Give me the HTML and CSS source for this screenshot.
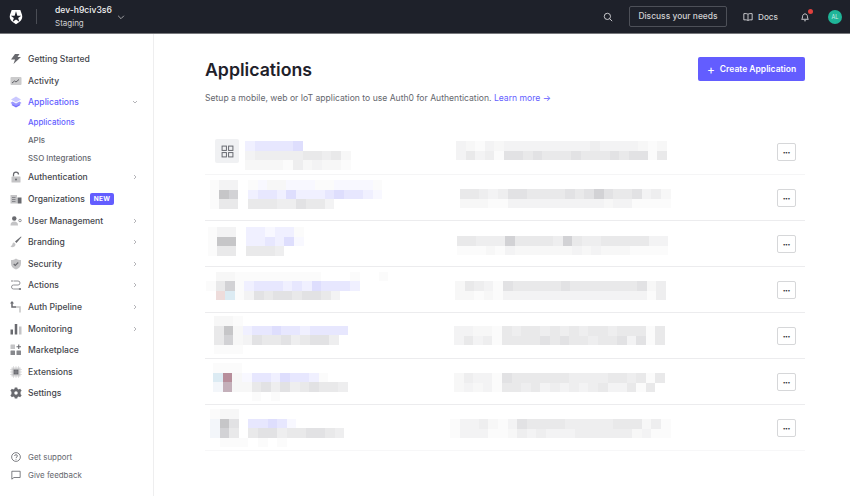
FILE: index.html
```html
<!DOCTYPE html>
<html lang="en">

<head>
    <meta charset="UTF-8">
    <title>Applications</title>
    <link rel="stylesheet" href="styles.css">
</head>

<body>
    <header class="topbar">
        <svg class="logo" viewBox="0 0 24 24"><path fill="#fff" fill-rule="evenodd" d="M18.500 1.500h-13L3 8.500C1.800 12.300 3.200 16.500 6.500 19L12 23l5.500-4c3.300-2.500 4.700-6.700 3.500-10.500zM17 19l-5-3.400L7 19l1.800-5.400L4.200 10H10l2-6.500 2 6.500h5.800l-4.600 3.600z"/></svg>
        <span class="topbar-divider"></span>
        <div class="tenant">
            <div class="tenant-name">dev-h9civ3s6</div>
            <div class="tenant-env">Staging</div>
        </div>
        <svg class="tenant-chevron" viewBox="0 0 12 12"><path d="M2.500 4.500 6 8l3.500-3.500"/></svg>

        <div class="topbar-right">
            <svg class="top-icon search" viewBox="0 0 24 24"><circle cx="10.500" cy="10.500" r="7.500"/><path d="m16 16 6 6"/></svg>
            <a class="discuss">Discuss your needs</a>
            <a class="docs">
                <svg class="top-icon" viewBox="0 0 24 24"><path d="M12 5.500C10 3.800 6 3.500 2 4v15c4-.5 8-.2 10 1.500 2-1.700 6-2 10-1.500V4c-4-.5-8-.2-10 1.500zM12 5.500v15"/></svg>
                Docs
            </a>
            <span class="bell">
                <svg class="top-icon" viewBox="0 0 24 24"><path d="M4 17.500c1.500-1.500 2-3 2-6 0-4 2.500-7 6-7s6 3 6 7c0 3 .5 4.500 2 6zM10 21h4"/></svg>
                <i class="bell-dot"></i>
            </span>
            <span class="avatar">AL</span>
        </div>
    </header>

    <div class="layout">
        <aside class="sidebar">
            <nav>
                <a class="nav-item">
                    <svg class="nav-icon" viewBox="0 0 24 24"><path fill="#55565c" d="M10 2h9l-4 6h7L7 22l3-9H2z"/></svg>
                    Getting Started
                </a>
                <a class="nav-item">
                    <svg class="nav-icon" viewBox="0 0 24 24"><rect x="1" y="4" width="22" height="16" rx="2" fill="#c4c4c6"/><path fill="none" stroke="#4d4e54" stroke-width="2" d="m4 16 5-4 3 2 6-5"/></svg>
                    Activity
                </a>
                <a class="nav-item active">
                    <svg class="nav-icon" viewBox="0 0 24 24"><path fill="#c3c1ff" d="m12 1 10 6-10 6L2 7z"/><path fill="#8f8bff" d="m5 11 7 4 7-4 4 3-11 7-11-7z"/><path fill="#635dff" d="m5 16 7 4 7-4 2 2-9 5-9-5z"/></svg>
                    Applications
                    <svg class="nav-chevron" viewBox="0 0 12 12"><path d="M3 4.500 6 7.500l3-3"/></svg>
                </a>
                <div class="sub-nav">
                    <a class="sub-item active">Applications</a>
                    <a class="sub-item">APIs</a>
                    <a class="sub-item">SSO Integrations</a>
                </div>
                <a class="nav-item">
                    <svg class="nav-icon" viewBox="0 0 24 24"><path fill="none" stroke="#55565c" stroke-width="2.500" d="M7 11V7a5 5 0 0 1 10 0"/><rect x="3" y="11" width="18" height="12" rx="1" fill="#bdbdbf"/><circle cx="12" cy="17" r="2" fill="#55565c"/></svg>
                    Authentication
                    <svg class="nav-chevron" viewBox="0 0 12 12"><path d="M4.500 3 7.500 6l-3 3"/></svg>
                </a>
                <a class="nav-item">
                    <svg class="nav-icon" viewBox="0 0 24 24"><rect x="1" y="4" width="13" height="17" fill="#bdbdbf"/><rect x="15" y="9" width="8" height="12" fill="#55565c"/><path stroke="#77787e" stroke-width="2" d="M4 9h7M4 13h7M4 17h7"/></svg>
                    Organizations
                    <span class="badge">NEW</span>
                </a>
                <a class="nav-item">
                    <svg class="nav-icon" viewBox="0 0 24 24"><circle cx="8.500" cy="7" r="4.500" fill="#55565c"/><path fill="#bdbdbf" d="M1 21c0-6 3-8 7.500-8s7.500 2 7.500 8z"/><circle cx="20" cy="11" r="2.500" fill="none" stroke="#77787e" stroke-width="1.800"/></svg>
                    User Management
                    <svg class="nav-chevron" viewBox="0 0 12 12"><path d="M4.500 3 7.500 6l-3 3"/></svg>
                </a>
                <a class="nav-item">
                    <svg class="nav-icon" viewBox="0 0 24 24"><path fill="#55565c" d="m22 1 1 1-10 12-3-3z"/><path fill="#bdbdbf" d="M8 13c-3 0-3 4-4 5l-3 4c5 1 10 0 10-6z"/></svg>
                    Branding
                    <svg class="nav-chevron" viewBox="0 0 12 12"><path d="M4.500 3 7.500 6l-3 3"/></svg>
                </a>
                <a class="nav-item">
                    <svg class="nav-icon" viewBox="0 0 24 24"><path fill="#bdbdbf" d="M12 1c3 2 6 3 10 3v7c0 6-4 10-10 12C6 21 2 17 2 11V4c4 0 7-1 10-3z"/><path fill="none" stroke="#55565c" stroke-width="2.200" d="m7.500 12 3 3 6-6"/></svg>
                    Security
                    <svg class="nav-chevron" viewBox="0 0 12 12"><path d="M4.500 3 7.500 6l-3 3"/></svg>
                </a>
                <a class="nav-item">
                    <svg class="nav-icon" viewBox="0 0 24 24"><rect x="2" y="2" width="5" height="4" fill="#bdbdbf"/><rect x="17" y="18" width="5" height="4" fill="#77787e"/><path fill="none" stroke="#77787e" stroke-width="1.800" d="M8 4h8a3.500 3.500 0 0 1 0 8H7a4 4 0 0 0 0 8h9"/></svg>
                    Actions
                    <svg class="nav-chevron" viewBox="0 0 12 12"><path d="M4.500 3 7.500 6l-3 3"/></svg>
                </a>
                <a class="nav-item">
                    <svg class="nav-icon" viewBox="0 0 24 24"><path fill="none" stroke="#55565c" stroke-width="3" d="M4 3v9h8"/><path fill="none" stroke="#bdbdbf" stroke-width="3" d="M12 12h8v11"/><path fill="#55565c" d="M0 5l4-5 4 5z"/></svg>
                    Auth Pipeline
                    <svg class="nav-chevron" viewBox="0 0 12 12"><path d="M4.500 3 7.500 6l-3 3"/></svg>
                </a>
                <a class="nav-item">
                    <svg class="nav-icon" viewBox="0 0 24 24"><rect x="1" y="13" width="5" height="10" fill="#55565c"/><rect x="9.500" y="2" width="5" height="21" fill="#55565c"/><rect x="18" y="7" width="5" height="16" fill="#bdbdbf"/></svg>
                    Monitoring
                    <svg class="nav-chevron" viewBox="0 0 12 12"><path d="M4.500 3 7.500 6l-3 3"/></svg>
                </a>
                <a class="nav-item">
                    <svg class="nav-icon" viewBox="0 0 24 24"><rect x="1" y="1" width="9" height="9" rx="1" fill="#bdbdbf"/><rect x="1" y="13" width="9" height="9" rx="1" fill="#77787e"/><rect x="13" y="13" width="9" height="9" rx="1" fill="#77787e"/><path stroke="#55565c" stroke-width="2.200" d="M17.500 1v9M13 5.500h9"/></svg>
                    Marketplace
                </a>
                <a class="nav-item">
                    <svg class="nav-icon" viewBox="0 0 24 24"><rect x="3" y="3" width="18" height="18" fill="#d4d4d6"/><rect x="7" y="7" width="10" height="10" fill="#55565c"/><path stroke="#a8a8ac" stroke-width="1.500" d="M7 0v24M12 0v24M17 0v24M0 7h24M0 12h24M0 17h24" opacity=".45"/></svg>
                    Extensions
                </a>
                <a class="nav-item">
                    <svg class="nav-icon" viewBox="0 0 24 24"><path fill="#55565c" fill-rule="evenodd" d="M9.500 1h5l.7 3.200 2.200 1 2.900-1.700 3 3.800-2.200 2.300v4.800l2.200 2.300-3 3.800-2.900-1.700-2.200 1-.7 3.200h-5l-.7-3.200-2.200-1-2.900 1.700-3-3.800 2.200-2.300V9.600L.7 7.300l3-3.800 2.900 1.700 2.200-1zM12 8.500a3.500 3.500 0 1 0 0 7 3.500 3.500 0 0 0 0-7z"/></svg>
                    Settings
                </a>
            </nav>
            <div class="sidebar-foot">
                <a class="foot-item">
                    <svg class="foot-icon" viewBox="0 0 24 24"><circle cx="12" cy="12" r="10.500"/><path d="M8.500 9.500C8.500 7.500 10 6.500 12 6.500s3.500 1.200 3.500 3c0 2.500-3.500 2.500-3.500 5M12 16.500v2"/></svg>
                    Get support
                </a>
                <a class="foot-item">
                    <svg class="foot-icon" viewBox="0 0 24 24"><path d="M2 3h20v15H7l-5 4z"/></svg>
                    Give feedback
                </a>
            </div>
        </aside>

        <main class="content">
            <div class="page-head">
                <h1>Applications</h1>
                <a class="create-btn"><span class="plus">+</span>Create Application</a>
            </div>
            <p class="page-desc">Setup a mobile, web or IoT application to use Auth0 for Authentication. <a>Learn more →</a></p>
            <div class="app-list" id="apps"></div>
        </main>
    </div>

    <script src="app.js"></script>
</body>

</html>
```

FILE: styles.css
```css
* {
    box-sizing: border-box;
}

html,
body {
    height: 100%;
}

body {
    margin: 0;
    overflow: hidden;
    background-color: #fff;
    color: #1e212a;
    font-family: Inter, "Liberation Sans", sans-serif;
}

a {
    text-decoration: none;
}

.topbar {
    display: flex;
    align-items: center;
    height: 34px;
    padding-left: 8px;
    background-color: #1e212a;
    border-bottom: 1px solid #77787c;
}

.logo {
    width: 16px;
    height: 16px;
}

.topbar-divider {
    width: 1px;
    height: 15px;
    margin: 0 18px 0 12px;
    background-color: #4a4d55;
}

.tenant-name {
    color: #f1f1f2;
    font-size: 8.600px;
    font-weight: 500;
    line-height: 12px;
}

.tenant-env {
    margin-top: 1px;
    color: #cfd0d2;
    font-size: 8px;
    line-height: 12px;
}

.tenant-chevron {
    width: 10px;
    height: 10px;
    margin-left: 4px;
    fill: none;
    stroke: #b9babd;
}

.topbar-right {
    display: flex;
    align-items: center;
    margin-left: auto;
    padding-right: 8px;
}

.top-icon {
    width: 10px;
    height: 10px;
    fill: none;
    stroke: #e6e6e8;
    stroke-width: 2;
}

.search {
    width: 10px;
    height: 10px;
    margin-right: 16px;
}

.discuss {
    display: block;
    width: 98px;
    height: 21px;
    border: 1px solid #4d5058;
    border-radius: 2px;
    color: #d0d0d2;
    font-size: 8.450px;
    font-weight: 500;
    line-height: 19px;
    text-align: center;
}

.docs {
    display: flex;
    align-items: center;
    gap: 5px;
    margin-left: 16px;
    color: #d0d0d2;
    font-size: 8.200px;
    font-weight: 500;
}

.bell {
    position: relative;
    display: flex;
    margin-left: 22px;
}

.bell-dot {
    position: absolute;
    top: -3px;
    right: -3px;
    width: 5px;
    height: 5px;
    border-radius: 50%;
    background-color: #e0413e;
}

.avatar {
    width: 14px;
    height: 14px;
    margin-left: 18px;
    border-radius: 50%;
    background-color: #1fb598;
    color: #cdeee6;
    font-size: 5.500px;
    line-height: 14px;
    text-align: center;
}

.layout {
    display: flex;
    height: 462px;
}

.sidebar {
    display: flex;
    flex-direction: column;
    flex: none;
    width: 154px;
    padding: 14.200px 0 12px 10px;
    border-right: 1px solid #eeeeef;
}

.nav-item {
    display: flex;
    align-items: center;
    height: 21.600px;
    color: #45464c;
    font-size: 8.550px;
    font-weight: 500;
}

.nav-item.active {
    color: #635dff;
}

.nav-icon {
    flex: none;
    width: 12px;
    height: 12px;
    margin-right: 6px;
    opacity: .88;
}

.nav-chevron {
    width: 8px;
    height: 8px;
    margin-left: auto;
    margin-right: 14px;
    fill: none;
    stroke: #8f9095;
}

.sub-nav {
    height: 53.600px;
}

.sub-item {
    display: block;
    height: 18px;
    padding-left: 18px;
    color: #65676e;
    font-size: 7.900px;
    font-weight: 500;
    line-height: 18px;
}

.sub-item.active {
    color: #635dff;
}

.badge {
    margin-left: 5px;
    padding: 0 4px;
    border-radius: 2px;
    background-color: #635dff;
    color: #fff;
    font-size: 6.500px;
    font-weight: 700;
    line-height: 12px;
    letter-spacing: .3px;
}

.sidebar-foot {
    margin-top: auto;
}

.foot-item {
    display: flex;
    align-items: center;
    gap: 7px;
    height: 18px;
    padding-left: 1px;
    color: #65676e;
    font-size: 7.900px;
}

.foot-icon {
    width: 10px;
    height: 10px;
    fill: none;
    stroke: #55565c;
    stroke-width: 1.800;
}

.content {
    flex: 1;
    padding: 23px 45px 0 51px;
}

.page-head {
    display: flex;
    align-items: center;
    justify-content: space-between;
    height: 24px;
}

h1 {
    margin: 0;
    font-size: 17.700px;
    font-weight: 600;
}

.create-btn {
    display: flex;
    align-items: center;
    justify-content: center;
    width: 107px;
    height: 24px;
    border-radius: 2px;
    background-color: #635dff;
    color: #fff;
    font-size: 8.500px;
    font-weight: 600;
}

.plus {
    margin-right: 5px;
    font-size: 12px;
    font-weight: 400;
}

.page-desc {
    margin: 10px 0 0;
    color: #65676e;
    font-size: 8.600px;
    line-height: 14px;
}

.page-desc a {
    color: #635dff;
}

.app-list {
    margin-top: 24px;
}

.app-row {
    display: grid;
    grid-template-columns: 245px 1fr auto;
    height: 46px;
    border-bottom: 1px solid #ececee;
}

.app-row:first-child {
    border-bottom-color: #f5f5f6;
}

.app-row:last-child {
    border-bottom-color: #f7f7f8;
}

.app-name {
    display: flex;
    align-items: flex-start;
}

.tile {
    display: flex;
    align-items: center;
    justify-content: center;
    flex: none;
    width: 24px;
    height: 24px;
    margin: -2px 6px 0 10px;
    border-radius: 2px;
    background-color: #f0f1f3;
}

.tile svg {
    width: 13px;
    height: 13px;
    fill: none;
    stroke: #65676e;
    stroke-width: 1.800;
}

.blur-line {
    display: flex;
    height: 9.600px;
}

.blur-line i {
    flex: none;
    width: 9.600px;
}

.more-btn {
    align-self: center;
    width: 19px;
    height: 18px;
    margin-right: 9px;
    padding: 0;
    border: 1px solid #d6d7d9;
    border-radius: 2px;
    background-color: #fff;
    color: #2a2c33;
    font-family: inherit;
    font-size: 5px;
    font-weight: 700;
    line-height: 10px;
}

/* pixelated cell shades */
.a { background-color: #fbfbfb; }
.b { background-color: #f7f7f7; }
.c { background-color: #f3f3f4; }
.d { background-color: #eeeeef; }
.e { background-color: #e9e9ea; }
.f { background-color: #e2e2e4; }
.g { background-color: #d2d2d5; }
.h { background-color: #c6c6c8; }
.p { background-color: #f8f8ff; }
.q { background-color: #f0f0ff; }
.r { background-color: #e7e7fe; }
.s { background-color: #dedefd; }
.t { background-color: #dcebf3; }
.u { background-color: #eedcdb; }
.v { background-color: #b78e9b; }
.w { background-color: #c4b0ba; }
.x { background-color: #f3f6fa; }
```

FILE: app.js
```js
// list rows are blurred in the design, each line is a string of shade classes
var apps = [
    {
        tile: true, nameX: 0, nameY: 12, urlX: 6, urlY: 12,
        name: ['qrrrrs', 'cdddddeedeb', 'bbbbadbcbba'],
        url: ['cbacbcccccccccdccccbab', 'cecdaffefeeefeeefeffae']
    },
    {
        nameX: 4.7, nameY: 5, urlX: 0, urlY: 14,
        name: ['acc.apbbpppaappppa', 'ahg.qrrqsqqqrsrrqp', 'aee.eeeddfeec'],
        url: ['.eedcdffeeeefefgfeefcdb', '.bbbaaccccccccccbccaaaa']
    },
    {
        nameX: 2.7, nameY: 6, urlX: 7, urlY: 15,
        name: ['acc.qqpqqa', 'ahh.qqrqsp', 'aee.eeed'],
        url: ['eedddgeeeedgeddeeeeecc', 'aaabacbbbbbbcbcbbbaaaa']
    },
    {
        nameX: 1, nameY: 4.7, urlX: 5, urlY: 14,
        name: ['.bbaaaaaaaaa...a..a', 'aegaqrrrqrqsrrrq', '.utacfeffeffec'],
        url: ['bedcafeeeeefeeeeeeefbd', 'bbabacccccccccccccccad']
    },
    {
        nameX: 9, nameY: 3, urlX: 4, urlY: 13,
        name: ['bba', 'ehbqrrsrrqrrrr', 'egbcfeefdeffd', 'aaa'],
        url: ['ccbbaedeedededeedeeeae', 'cecdaeeeefefeedeefcfae']
    },
    {
        nameX: 8.3, nameY: 4, urlX: 4, urlY: 14,
        name: ['aaa', 'tvbprrqsrrqa', 'xwbbefdfdefeed', '....a.a'],
        url: ['bdccafeeeeeeddddeedeae', 'bcbcaeedecdcdcdecceae']
    },
    {
        nameX: 5, nameY: 4, urlX: 0, urlY: 14,
        name: ['abb', 'xhf.rrsrp', 'xge.effdeeffed', '.aaa.a.a'],
        url: ['accdbacfeeeedddddeeebda', 'acccaabdcdcccddddddbcaa']
    }
];

function blurBlock(lines, x, y) {
    var block = document.createElement('div');
    block.className = 'blur';
    block.style.marginLeft = x + 'px';
    block.style.marginTop = y + 'px';
    lines.forEach(function(line) {
        var row = document.createElement('div');
        row.className = 'blur-line';
        line.split('').forEach(function(c) {
            var cell = document.createElement('i');
            if (c !== '.') cell.className = c;
            row.appendChild(cell);
        });
        block.appendChild(row);
    });
    return block;
}

var list = document.getElementById('apps');

apps.forEach(function(app) {
    var row = document.createElement('div');
    row.className = 'app-row';

    var name = document.createElement('div');
    name.className = 'app-name';
    if (app.tile) {
        var tile = document.createElement('span');
        tile.className = 'tile';
        tile.innerHTML = '<svg viewBox="0 0 24 24"><rect x="2" y="2" width="8" height="8"/><rect x="14" y="2" width="8" height="8"/><rect x="2" y="14" width="8" height="8"/><rect x="14" y="14" width="8" height="8"/></svg>';
        tile.style.marginTop = (app.nameY - 2) + 'px';
        name.appendChild(tile);
    }
    name.appendChild(blurBlock(app.name, app.nameX, app.nameY));
    row.appendChild(name);

    var url = document.createElement('div');
    url.appendChild(blurBlock(app.url, app.urlX, app.urlY));
    row.appendChild(url);

    var btn = document.createElement('button');
    btn.className = 'more-btn';
    btn.textContent = '•••';
    row.appendChild(btn);

    list.appendChild(row);
});
```
